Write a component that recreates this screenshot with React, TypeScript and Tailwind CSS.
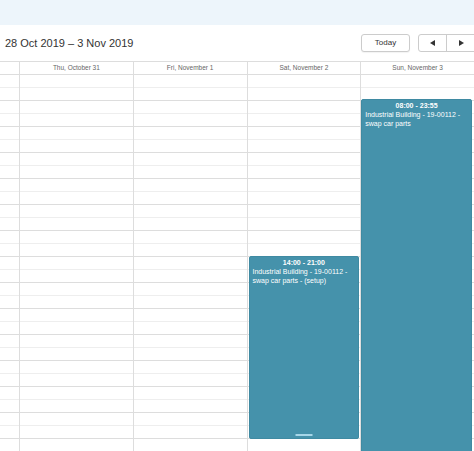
import React from 'react';

const days = ['Thu, October 31', 'Fri, November 1', 'Sat, November 2', 'Sun, November 3'];
const rows = Array.from({ length: 29 }, (_, i) => i);

const Rows = () => (
    <>
        {rows.map(i => (
            <div
                key={i}
                className={`h-[13px] border-t ${i % 2 === 0 ? 'border-[#dddddd]' : 'border-[#eeeeee]'}`}
            />
        ))}
    </>
);

const Event = ({ time, title, className, handle }: { time: string; title: string; className: string; handle?: boolean }) => (
    <div className={`absolute rounded-[2px] border border-[#3f8aa2] bg-[#4592ab] text-white ${className}`}>
        <div className="text-center text-[7px] font-bold leading-[9px] pt-[1px]">{time}</div>
        <div className="px-[3px] pt-[1px] text-[7px] leading-[8.5px]">{title}</div>
        {handle && (
            <div className="absolute bottom-[2px] left-1/2 -translate-x-1/2 h-[2px] w-[17px] bg-[#a6d6e8]" />
        )}
    </div>
);

export default function App() {
    return (
        <div className="w-[474px] h-[451px] overflow-hidden bg-white font-['Liberation_Sans',Arial,sans-serif] text-[#333]">
            {/* top band */}
            <div className="h-[25px] bg-[#edf5fb]" />

            {/* toolbar */}
            <div className="h-[36px] flex items-center justify-between">
                <div className="pl-[5px] text-[11px] text-[#333]">28 Oct 2019 – 3 Nov 2019</div>
                <div className="flex items-center gap-[8px] -mr-[3px]">
                    <button className="w-[49px] h-[18px] rounded-[3px] border border-[#cccccc] bg-white text-[8px] text-[#333] shadow-[0_1px_1px_rgba(0,0,0,0.05)]">
                        Today
                    </button>
                    <div className="flex h-[18px] rounded-[3px] border border-[#cccccc] bg-white">
                        <button className="w-[28px] flex items-center justify-center border-r border-[#cccccc]">
                            <svg width="5" height="6" viewBox="0 0 5 6"><polygon points="5,0 5,6 0,3" fill="#333" /></svg>
                        </button>
                        <button className="w-[29px] flex items-center justify-center">
                            <svg width="5" height="6" viewBox="0 0 5 6"><polygon points="0,0 0,6 5,3" fill="#333" /></svg>
                        </button>
                    </div>
                </div>
            </div>

            {/* calendar */}
            <div className="border-t border-[#dddddd]">
                <div className="grid grid-cols-[19px_repeat(4,1fr)] h-[12px]">
                    <div />
                    {days.map(d => (
                        <div key={d} className="border-l border-[#dddddd] text-center text-[6.5px] leading-[12px] text-[#666]">
                            {d}
                        </div>
                    ))}
                </div>
                <div className="grid grid-cols-[19px_repeat(4,1fr)]">
                    <div>
                        <Rows />
                    </div>
                    {days.map((d, idx) => (
                        <div key={d} className="relative border-l border-[#dddddd]">
                            <Rows />
                            {idx === 2 && (
                                <Event
                                    time="14:00 - 21:00"
                                    title="Industrial Building - 19-00112 - swap car parts - (setup)"
                                    className="top-[182px] h-[183px] left-[1px] right-[1px]"
                                    handle
                                />
                            )}
                            {idx === 3 && (
                                <Event
                                    time="08:00 - 23:55"
                                    title="Industrial Building - 19-00112 - swap car parts"
                                    className="top-[25px] h-[420px] left-0 right-[2px]"
                                />
                            )}
                        </div>
                    ))}
                </div>
            </div>
        </div>
    );
}
